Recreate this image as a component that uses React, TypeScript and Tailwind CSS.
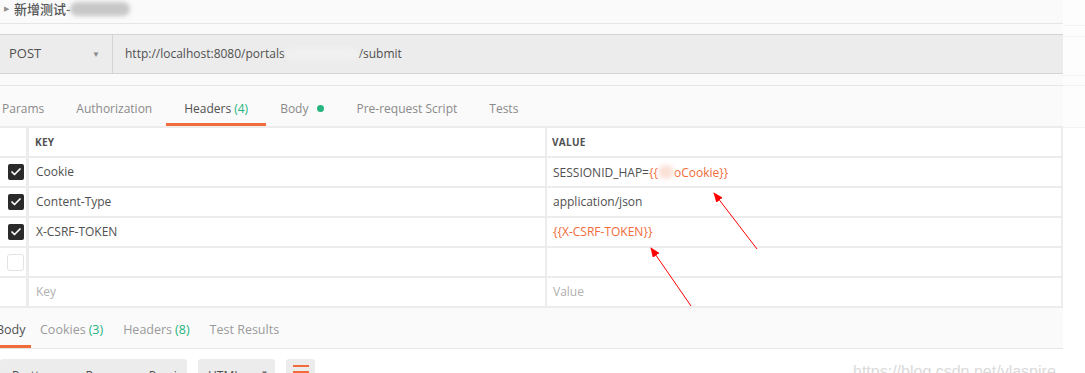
import { Check } from 'lucide-react'

const tabs = [
  { label: 'Params' },
  { label: 'Authorization' },
  { label: 'Headers', count: '(4)', active: true },
  { label: 'Body', dot: true },
  { label: 'Pre-request Script' },
  { label: 'Tests' },
]

const rows = [
  { key: 'Cookie', value: 'cookie', checked: true },
  { key: 'Content-Type', value: 'application/json', checked: true },
  { key: 'X-CSRF-TOKEN', value: 'csrf', checked: true },
]

function Checkbox({ checked }: { checked: boolean }) {
  if (!checked) return <div className="h-[17px] w-[17px] rounded-[3px] border border-[#e3e3e3] bg-white" />
  return (
    <div className="flex h-[16px] w-[16px] items-center justify-center rounded-[2px] bg-[#2a2a2a]">
      <Check size={12} strokeWidth={3.5} className="text-white" />
    </div>
  )
}

function ValueText({ value }: { value: string }) {
  if (value === 'cookie')
    return (
      <span>
        SESSIONID_HAP=<span className="text-[#f26b3a]">{'{{'}</span>
        <span className="inline-block h-[14px] w-[16px] translate-y-[2px] rounded-full bg-[#fbe2d8] blur-[2px]" />
        <span className="text-[#f26b3a]">{'oCookie}}'}</span>
      </span>
    )
  if (value === 'csrf') return <span className="text-[#f26b3a]">{'{{X-CSRF-TOKEN}}'}</span>
  return <span>{value}</span>
}

export default function App() {
  return (
    <div className="relative flex h-[373px] w-[1085px] items-start overflow-hidden bg-white font-['Open_Sans',sans-serif] text-[12px] text-[#505050]">
      <div className="w-[1063px] shrink-0">
        {/* title */}
        <div className="flex h-[24px] items-center gap-[5px] border-b border-[#e6e6e6] bg-[#fafafa] pb-[5px] pl-[4px]">
          <span className="text-[7px] text-[#909090]">▶</span>
          <span className="font-['Noto_Sans_CJK_SC',sans-serif] text-[13px] font-medium text-[#555]">新增测试-</span>
          <span className="-ml-[6px] inline-block h-[14px] w-[60px] rounded-full bg-[#c8c8c8] blur-[2px]" />
        </div>
        <div className="h-[10px] bg-[#fafafa]" />

        {/* url bar */}
        <div className="flex h-[40px] border-y border-[#d4d4d4] bg-[#ececec]">
          <div className="flex w-[113px] items-center justify-between border-r border-[#d4d4d4] pl-[9px] pr-[12px]">
            <span className="text-[13px]">POST</span>
            <span className="text-[8px] text-[#8a8a8a]">▼</span>
          </div>
          <div className="flex items-center pl-[12px]">
            <span>http://localhost:8080/portals</span>
            <span className="inline-block h-[12px] w-[74px] rounded-full bg-[#f0f0f0] blur-[2px]" />
            <span>/submit</span>
          </div>
        </div>
        <div className="h-[11px] bg-[#fafafa]" />

        {/* request tabs */}
        <div className="flex h-[41px] border-t border-[#e6e6e6] bg-[#fafafa] pl-[2px]">
          {tabs.map((t, i) => (
            <div
              key={t.label}
              className={`flex items-center gap-[3px] border-b-[3px] pt-[8px] ${i === 0 ? 'pr-[16px]' : 'px-[16px]'} ${
                t.active ? '-mx-[2px] border-[#f26b3a] px-[18px] text-[#505050]' : 'border-transparent text-[#8a8a8a]'
              }`}
            >
              <span>{t.label}</span>
              {t.count && <span className="text-[#26b47f]">{t.count}</span>}
              {t.dot && <span className="ml-[6px] h-[7px] w-[7px] rounded-full bg-[#26b47f]" />}
            </div>
          ))}
        </div>

        {/* headers table */}
        <div className="grid grid-cols-[29px_518px_516px] border-t-2 border-[#ececec] bg-white">
          <div className="h-[30px] border-b-2 border-r-[3px] border-[#ececec]" />
          <div className="flex h-[30px] items-center border-b-2 border-r-2 border-[#ececec] pl-[6px] text-[10px] font-bold tracking-[0.3px] text-[#505050]">
            KEY
          </div>
          <div className="flex h-[30px] items-center border-b-2 border-r-2 border-[#ececec] pl-[5px] text-[10px] font-bold tracking-[0.3px] text-[#505050]">
            VALUE
          </div>
          {rows.map((r) => (
            <div key={r.key} className="contents">
              <div className="flex h-[30px] items-center border-b-2 border-r-[3px] border-[#ececec] pl-[8px]">
                <Checkbox checked={r.checked} />
              </div>
              <div className="flex h-[30px] items-center border-b-2 border-r-2 border-[#ececec] pl-[7px]">{r.key}</div>
              <div className="flex h-[30px] items-center border-b-2 border-r-2 border-[#ececec] pl-[6px]">
                <ValueText value={r.value} />
              </div>
            </div>
          ))}
          <div className="flex h-[30px] items-center border-b-2 border-r-[3px] border-[#ececec] pl-[7px]">
            <Checkbox checked={false} />
          </div>
          <div className="h-[30px] border-b-2 border-r-2 border-[#ececec]" />
          <div className="h-[30px] border-b-2 border-r-2 border-[#ececec]" />
          <div className="h-[30px] border-b-2 border-r-[3px] border-[#ececec]" />
          <div className="flex h-[30px] items-center border-b-2 border-r-2 border-[#ececec] pl-[7px] text-[#b0b0b0]">Key</div>
          <div className="flex h-[30px] items-center border-b-2 border-r-2 border-[#ececec] pl-[6px] text-[#b0b0b0]">Value</div>
        </div>

        {/* response tabs */}
        <div className="flex h-[41px] border-b border-[#e6e6e6] bg-[#fafafa] text-[12.5px]">
          <div className="-ml-[4px] flex w-[35px] items-center border-b-[3px] border-[#f26b3a] pt-[8px] text-[#505050]">
            Body
          </div>
          <div className="flex items-center gap-[3px] border-b-[3px] border-transparent pl-[9px] pr-[10px] pt-[8px] text-[#9a9a9a]">
            Cookies <span className="text-[#26b47f]">(3)</span>
          </div>
          <div className="flex items-center gap-[3px] border-b-[3px] border-transparent px-[10px] pt-[8px] text-[#9a9a9a]">
            Headers <span className="text-[#26b47f]">(8)</span>
          </div>
          <div className="flex items-center border-b-[3px] border-transparent px-[10px] pt-[8px] text-[#9a9a9a]">
            Test Results
          </div>
        </div>

        {/* response toolbar */}
        <div className="flex gap-[11px] pt-[10px]">
          <div className="flex h-[30px] w-[187px] gap-[40px] rounded-[3px] bg-[#ececec] pl-[12px] pt-[8px] text-[#505050]">
            <span>Pretty</span>
            <span>Raw</span>
            <span>Preview</span>
          </div>
          <div className="flex h-[30px] w-[77px] gap-[20px] rounded-[3px] bg-[#ececec] pl-[10px] pt-[8px]">
            <span>HTML</span>
            <span className="text-[8px] text-[#707070]">▼</span>
          </div>
          <div className="flex h-[30px] w-[29px] flex-col items-center gap-[4px] rounded-[3px] bg-[#ececec] pt-[6px]">
            <span className="h-[2px] w-[16px] bg-[#f26b3a]" />
            <span className="h-[2px] w-[16px] bg-[#f26b3a]" />
          </div>
        </div>
      </div>

      {/* right strip */}
      <div className="w-[22px] shrink-0 bg-[#fdfdfd]">
        <div className="h-[26px] border-b border-[#f3f3f3]" />
        <div className="h-[11px] border-b border-[#f3f3f3]" />
        <div className="h-[39px] border-b border-[#f3f3f3]" />
        <div className="h-[10px] border-b border-[#f3f3f3]" />
        <div className="h-[42px] border-b border-[#f3f3f3]" />
      </div>

      {/* watermark */}
      <div className="absolute left-[853px] top-[360px] font-['Liberation_Sans',sans-serif] text-[16px] text-[#dadada]">
        https://blog.csdn.net/vlaspire
      </div>

      {/* annotation arrows */}
      <svg className="absolute left-0 top-0" width="1085" height="373">
        <defs>
          <marker id="ah" markerWidth="10" markerHeight="8" refX="9" refY="4" orient="auto" markerUnits="userSpaceOnUse">
            <path d="M0,0 L10,4 L0,8 z" fill="#ff0000" />
          </marker>
        </defs>
        <line x1="757" y1="249" x2="714" y2="193" stroke="#ff0000" strokeWidth="1" markerEnd="url(#ah)" />
        <line x1="691" y1="306" x2="651" y2="248" stroke="#ff0000" strokeWidth="1" markerEnd="url(#ah)" />
      </svg>
    </div>
  )
}
